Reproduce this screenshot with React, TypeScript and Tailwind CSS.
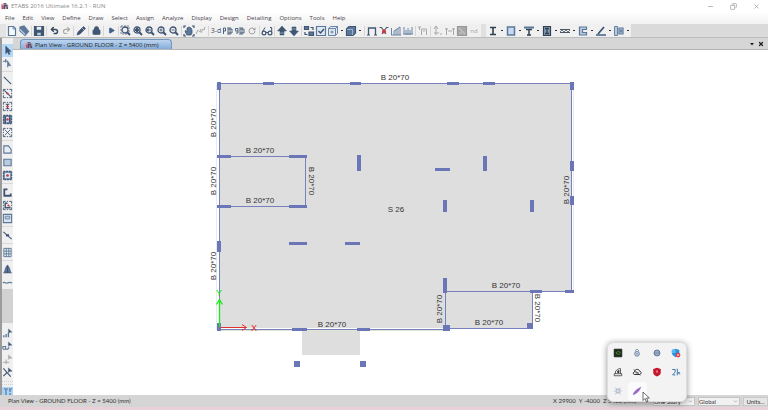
import type { ReactNode } from 'react';
import { ChevronDown, Copy, Lock, Minus, Play, Redo2, RotateCcw, Undo2, X } from 'lucide-react';

const NAVY = '#3f5573';
const STEEL = '#5b789b';
const PALE = '#b9cbdd';
const GRAY = '#a9a9a9';

function Ico({ children, color = NAVY }: { children: ReactNode; color?: string }) {
  return (
    <svg viewBox="0 0 12 12" className="w-3 h-3 shrink-0" fill="none" stroke={color} strokeWidth="1.2">
      {children}
    </svg>
  );
}

function Magnifier({ children }: { children?: ReactNode }) {
  return (
    <Ico>
      <circle cx="5" cy="5" r="3" strokeWidth="1.3" />
      <path d="M7.3 7.3L10 10" strokeWidth="2" />
      {children}
    </Ico>
  );
}

function Marquee() {
  return <path d="M1.5 4V1.5H4M8 1.5h2.5V4M10.5 8v2.5H8M4 10.5H1.5V8M5.3 1.5h1.4M5.3 10.5h1.4M1.5 5.3v1.4M10.5 5.3v1.4" strokeWidth="1" />;
}

function AppLogo() {
  return (
    <svg viewBox="0 0 9 9" className="w-2 h-2 shrink-0">
      <path d="M0 2h3v6H0z" fill="#e6a3b8" />
      <path d="M1 4h2v4H1z" fill="#b8567c" />
      <path d="M3 1h3v2h2v5H6V5H5v3H3z" fill="#5a4c68" />
      <path d="M4 2h1v1H4zM7 4h1v1H7z" fill="#eee" />
    </svg>
  );
}

type Item = [string, ReactNode];

const toolbar: Item[][] = [
  [
    ['New Model', <Ico color={STEEL}><path d="M2.5 1.5h5l2 2v7h-7z" fill="#f6f9fc" /><path d="M7 1.5v2.5h2.5" strokeWidth=".8" /></Ico>],
    ['Open', <Ico color={STEEL}><path d="M2 2l4-1 4.5 5.5-3.5 4L2 6z" fill={STEEL} /><path d="M2 4.5l5 5" stroke={PALE} /></Ico>],
  ],
  [['Save', <Ico><path d="M1.5 1.5h9v9h-9z" fill={NAVY} /><path d="M3.5 1.5h5V5h-5z" fill="#e8eef4" strokeWidth=".5" /><path d="M4 7.5h4v3H4z" fill={PALE} strokeWidth=".5" /></Ico>]],
  [
    ['Undo', <Undo2 className="w-[9px] h-[9px] text-[#3a4a60]" strokeWidth={4} />],
    ['Redo', <Redo2 className="w-[9px] h-[9px] text-[#a9a9a9]" strokeWidth={3} />],
  ],
  [['Edit', <Ico><path d="M2 10l1-3 5.5-5.5 2 2L5 9z" fill={NAVY} strokeWidth=".7" /><path d="M7 3l2 2" stroke={PALE} strokeWidth=".7" /></Ico>]],
  [['Lock Model', <Lock className="w-[9px] h-[9px] text-[#3f5573]" strokeWidth={3} fill="#3f5573" />]],
  [['Run Analysis', <Play className="w-[7px] h-[7px] text-[#3f5f8a]" fill="#3f5f8a" />]],
  [
    ['Rubber Band Zoom', <Magnifier><path d="M1 1h8v8H1z" strokeWidth=".7" strokeDasharray="2 1" /></Magnifier>],
    ['Full View', <Magnifier><path d="M3 5h4M5 3v4" strokeWidth="2" /></Magnifier>],
    ['Previous Zoom', <Magnifier><path d="M3 5h4M4.5 3.5L3 5l1.5 1.5" /></Magnifier>],
    ['Zoom In', <Magnifier><path d="M3.5 5h3M5 3.5v3" strokeWidth=".9" /></Magnifier>],
    ['Zoom Out', <Magnifier><path d="M3.5 5h3" strokeWidth=".9" /></Magnifier>],
  ],
  [
    ['Pan', <Ico><path d="M1 3V1h2M9 1h2v2M11 9v2H9M3 11H1V9" /><path d="M3.5 9.5L2 6l1-.5 1 1V3l1-.5L6 2l1 .5 1 .5 1 2v3L8 10H4z" fill={STEEL} strokeWidth=".8" /></Ico>],
    ['Measure', <Ico color={GRAY}><path d="M1 9l2-4 2 2 1-3M6 8l2-4 1 1 1-3" strokeWidth="1" /></Ico>],
  ],
  [
    ['3-d', <span className="text-[7px] leading-3 text-[#3f4f68]">3-d</span>],
    ['Plan View', <Ico><path d="M1.5 9V3h2v3h-2M6 2v8M6 4h4v4H6M8 2v8" strokeWidth=".9" /></Ico>],
    ['Elevation View', <Ico><path d="M4 6H1.5V3.5H4V8H2M6 2v8M6 4h4v4H6M8 2v8" strokeWidth=".9" /></Ico>],
    ['Rotate 3D View', <RotateCcw className="w-2 h-2 -scale-x-100 text-[#a2a2a2]" strokeWidth={3} />],
  ],
  [['Perspective', <Ico><circle cx="3" cy="8" r="1.9" /><circle cx="9" cy="8" r="1.9" /><path d="M1.3 7L4 2.5M10.7 7V2.5H9M5 7.5h2" strokeWidth="1" /></Ico>]],
  [
    ['Move Up', <Ico><path d="M6 1L1.5 6H4v4h4V6h2.5z" fill={NAVY} strokeWidth=".5" /><path d="M4 8h4" stroke={PALE} strokeWidth=".6" /></Ico>],
    ['Move Down', <Ico><path d="M6 11L1.5 6H4V2h4v4h2.5z" fill={NAVY} strokeWidth=".5" /><path d="M4 4h4" stroke={PALE} strokeWidth=".6" /></Ico>],
  ],
  [
    ['Object Shrink', <Ico><path d="M1.5 1.5h4v3h-4zM6 7h4.5v3.5H6z" fill={STEEL} /><path d="M7.5 2.5H10V5M2 7v2.5h2.5" /></Ico>],
    ['Display Options', <Ico color={STEEL}><path d="M1.5 1.5h9v9h-9z" fill="#dfe8f1" /><path d="M3.5 6l2 2L9 4" stroke={NAVY} strokeWidth="1.5" /></Ico>],
    ['Assign Display', <Ico color={STEEL}><path d="M1.5 3.5l2-2h7v7l-2 2h-7z" fill="#dfe8f1" strokeWidth=".9" /><path d="M1.5 3.5h7v7M8.5 3.5l2-2M3.5 7h3M5 5.5v3" strokeWidth=".9" /></Ico>],
    ['drop', null],
    ['Object View', <Ico><path d="M1.5 4L4 1.5h6.5V8L8 10.5H1.5z" fill={STEEL} /><path d="M2 4.5h5.5V10" stroke={PALE} strokeWidth=".7" /></Ico>],
    ['drop', null],
  ],
  [
    ['Undeformed Shape', <Ico><path d="M2.5 10V3h7v7" strokeWidth="1.3" /><path d="M1 10h3M8 10h3" strokeWidth="1" /></Ico>],
    ['Deformed Shape', <Ico color="#565d68"><path d="M1.5 2.5h2L6 6l2.5-3.5h2M4 9l2-3 2 3" /><circle cx="6" cy="6.5" r="2" fill="#c93540" stroke="none" /></Ico>],
    ['Force Diagram', <Ico color={STEEL}><path d="M1.5 10V3M1 10h10M4 10V6l6-4v8M6 10V5M8 10V3.5" strokeWidth=".9" /></Ico>],
    ['Shear Diagram', <Ico color={STEEL}><path d="M1 9h10M2 2v7M4 5v5M6 3v7M8 5v5M10 2v7" strokeWidth=".9" /></Ico>],
  ],
  [['Energy Diagram', <Ico color={GRAY}><path d="M1 2h3M2.5 2v3M4.5 10V4h5v6M6 6h2" strokeWidth="1" /></Ico>]],
  [
    ['Joint Load', <Ico color={GRAY}><path d="M4 1v9M2 4l2-3 2 3M2 8h5M8 9h2" strokeWidth="1" /></Ico>],
    ['Frame Load', <Ico color={GRAY}><path d="M2.5 10V3M9.5 10V3M1 4h3M8 4h3M4 6h4" strokeWidth="1" /></Ico>],
    ['Shell Load', <Ico color="#989898"><path d="M1.5 1.5h9v9h-9z" fill="#a8a8a8" /><path d="M3 3l6 6M3 8h3" stroke="#c4c4c4" /></Ico>],
    ['nd', <span className="text-[6px] leading-3 text-[#a5a5a5]">nd</span>],
  ],
];

const sections: Item[] = [
  ['Steel Frame', <Ico color="#33404f"><path d="M3 2.5h6M3 9.5h6M6 2v8" strokeWidth="1.6" /></Ico>],
  ['Concrete Frame', <Ico><path d="M2.5 2h7v8h-7z" fill="#c6d9ee" stroke={STEEL} strokeWidth="1.5" /></Ico>],
  ['Composite Beam', <Ico color="#33404f"><path d="M1 2.5h10" stroke={STEEL} strokeWidth="2" /><path d="M3 4.5h6M6 4v6M4 10h4" strokeWidth="1.5" /></Ico>],
  ['Composite Column', <Ico color="#33404f"><path d="M2.5 1.5h7v9h-7z" fill="#8399b3" /><path d="M4 3.5h4M4 8.5h4M6 3.5v5" strokeWidth="1.3" /></Ico>],
  ['Steel Joist', <Ico color="#4b5563"><path d="M1 4.5h10M1 7.5h10" /><path d="M1 7l2-2 2 2 2-2 2 2 2-2" strokeWidth=".8" /></Ico>],
  ['Shear Wall', <Ico color={STEEL}><path d="M9.5 2h-7v8h7V7.500h-4v-3h4z" fill={PALE} /></Ico>],
  ['Slab Design', <Ico color={STEEL}><path d="M1 10h10" strokeWidth="1.8" /><path d="M3 9l6-7" stroke={NAVY} strokeWidth="1.8" /></Ico>],
  ['Connection', <Ico color={STEEL}><path d="M1.5 1.5h3v9h-3z" fill={PALE} strokeWidth=".9" /><path d="M6 3h4v6H6z" fill={PALE} /><path d="M8 4.5v3" stroke={NAVY} /></Ico>],
];

const drawTools: Item[][] = [
  [
    ['Select', <Ico><path d="M4 1v8.5l2-2L7.5 10.500l1.300-.6L7.500 7H10z" fill={NAVY} strokeWidth=".5" /></Ico>],
    ['Reshape', <Ico color={STEEL}><path d="M1 3.5h5M4 1v4" /><path d="M6 3v7l1.500-2 2 .5z" fill={STEEL} strokeWidth=".7" /></Ico>],
  ],
  [
    ['Draw Line', <Ico><path d="M2 2l8 8" /></Ico>],
    ['Quick Draw Beam', <Ico><Marquee /><path d="M2.5 2.5l7 7" /><circle cx="6" cy="6" r="1.2" fill="#c93540" stroke="none" /></Ico>],
    ['Quick Draw Column', <Ico><Marquee /><path d="M4 3.5h4M4 8.5h4M6 3.5v5" /><circle cx="6" cy="6" r="1.3" fill="#c93540" stroke="none" /></Ico>],
    ['Quick Draw Secondary', <Ico><path d="M1.5 1.5h9v9h-9z" fill={STEEL} strokeDasharray="2 1" /><path d="M4 2v8M8 2v8" /><path d="M4.5 3h3v6h-3z" fill="#dce5ee" stroke="none" /><circle cx="6" cy="6" r="1.3" fill="#c93540" stroke="none" /></Ico>],
    ['Quick Draw Brace', <Ico><Marquee /><path d="M3 3l6 6M9 3L3 9" strokeWidth=".9" /></Ico>],
  ],
  [
    ['Draw Floor', <Ico color={STEEL}><path d="M2 10V2h5l3 4v4z" fill="#e7edf3" /></Ico>],
    ['Draw Rectangle', <Ico color={STEEL}><path d="M2 2.5h8v7H2z" fill={PALE} /></Ico>],
    ['Quick Draw Floor', <Ico><path d="M1.5 1.5h9v9h-9z" fill={STEEL} strokeDasharray="2 1" /><path d="M3 3h6v6H3z" fill="#dce5ee" stroke="none" /><circle cx="6" cy="6" r="1.4" fill="#c93540" stroke="none" /></Ico>],
  ],
  [
    ['Draw Wall', <Ico><path d="M6 2.5H2.5v7h7V7" strokeWidth="2" /></Ico>],
    ['Quick Draw Wall', <Ico><Marquee /><path d="M6 3.5H3.5v5h5V7" strokeWidth="1.6" /><circle cx="7" cy="6" r="1.2" fill="#c93540" stroke="none" /></Ico>],
    ['Draw Opening', <Ico color={STEEL}><path d="M1.5 1.5h9v9h-9z" fill="#dce5ee" /><path d="M3.5 3.5h5v3h-5z" fill={PALE} strokeWidth=".8" /></Ico>],
  ],
  [['Draw Link', <Ico><path d="M1.5 2l9 8" /><path d="M4.5 6.5l3-1.5" strokeWidth="2" /></Ico>]],
  [['Draw Grid', <Ico color={STEEL}><path d="M2 1.5h8v9H2zM2 4.5h8M2 7.5h8M4.7 1.5v9M7.4 1.5v9" strokeWidth="1" /></Ico>]],
  [
    ['Draw Tower', <Ico><path d="M6 1l2 3 1.5 5h-7L4 4z" fill={STEEL} strokeWidth=".7" /><path d="M1.5 9.5h9M6 2v8" /></Ico>],
    ['Draw Tendon', <Ico color={STEEL}><path d="M1 6.5c2-2 3 1 5 0s3-1 5 0" strokeWidth="1.3" /></Ico>],
  ],
];

const snapTools: Item[] = [
  ['Snap to Joints', <Ico color={STEEL}><path d="M2 10V8M4.5 10V6.5M7 10V5" strokeWidth="1.5" /><path d="M7 1v5l1.5-1.5H11z" fill={NAVY} strokeWidth=".5" /></Ico>],
  ['Snap to Lines', <Ico color={STEEL}><path d="M1 9V6h3v3M6 9l2-2M1 9h6" /><path d="M7 1v5l1.5-1.5H11z" fill={NAVY} strokeWidth=".5" /></Ico>],
  ['Snap to Middle', <Ico color={GRAY}><path d="M1 9h7M4.5 6v5" /><path d="M7 1v5l1.5-1.5H11z" fill={GRAY} strokeWidth=".5" /></Ico>],
  ['Snap to Edges', <Ico><path d="M1.5 1.5l8 9M1.5 10l4-4" /><path d="M7 1v5l1.5-1.5H11z" fill={NAVY} strokeWidth=".5" /></Ico>],
];

const menus = ['File', 'Edit', 'View', 'Define', 'Draw', 'Select', 'Assign', 'Analyze', 'Display', 'Design', 'Detailing', 'Options', 'Tools', 'Help'];

// x, y, width, height of every column and wall in plan
const columns = [
  [217, 82, 4, 8], [263, 82, 11, 3], [350, 82, 11, 3], [447, 82, 12, 3], [483, 82, 12, 3], [570, 82, 4, 8],
  [570, 161, 4, 10], [570, 196, 4, 9], [217, 155, 14, 3], [289, 155, 18, 3], [217, 205, 14, 3], [289, 205, 18, 3],
  [357, 155, 4, 16], [483, 156, 4, 15], [435, 168, 15, 3], [443, 200, 4, 12], [530, 200, 4, 12],
  [217, 241, 4, 11], [289, 242, 18, 3], [345, 242, 15, 3], [217, 323, 4, 8], [292, 328, 15, 3], [357, 328, 13, 3],
  [294, 361, 6, 6], [360, 361, 6, 6], [443, 278, 4, 15], [530, 290, 12, 3], [565, 290, 9, 3], [443, 325, 7, 6], [527, 323, 6, 6],
];

// x, y, rotation
const beamLabels = [
  [395, 80, 0], [260, 153, 0], [260, 203, 0], [332, 327, 0], [506, 288, 0], [489, 325, 0],
  [216, 123, -90], [216, 181, -90], [216, 266, -90], [569, 190, -90], [442, 309, -90],
  [309, 181, 90], [535, 308, 90],
];

function PlanView() {
  return (
    <svg viewBox="13 50 755 345" className="w-full h-full" role="img" aria-label="Ground floor plan">
      <path d="M219 83H572V291H533V328H219z" fill="#dedede" />
      <path d="M302 331H360V355H302z" fill="#dedede" />
      <path d="M216.5 84V330M573.5 84V292" stroke="#e9e9f5" />
      <path d="M219 330.5H444" stroke="#dfe6cd" />
      <g stroke="#7580bd" fill="none">
        <path d="M219.5 329.5V83.5H571.5V291.5H445.5V329" />
        <path d="M219 329.5H446M446 328.5H530M532.5 291V325" />
        <path d="M219 156.5H305.5V206.5H219" />
      </g>
      {columns.map(([x, y, w, h]) => (
        <rect key={`${x}-${y}`} x={x} y={y} width={w} height={h} fill="#6a76b5" />
      ))}
      <g className="font-['Liberation_Sans',sans-serif] text-[8px]" fill="#333" textAnchor="middle">
        {beamLabels.map(([x, y, r]) => (
          <text key={`${x}-${y}`} transform={`translate(${x} ${y}) rotate(${r})`}>B 20*70</text>
        ))}
        <text x="396" y="212">S 26</text>
        <text x="219" y="296" fill="#0be00b" className="text-[9px]">Y</text>
        <text x="254" y="331" fill="#e81d1d" className="text-[9px]">X</text>
      </g>
      <path d="M219.5 327V300M216.5 304.5l3-5 3 5" fill="none" stroke="#1be81b" strokeWidth="1.3" />
      <path d="M221 327.5H246M242 324.5l4.5 3-4.5 3" fill="none" stroke="#e03030" />
    </svg>
  );
}

const trayIcons: Item[] = [
  ['NVIDIA Settings', <Ico color="#1d2a1d"><path d="M1.5 1.5h9v9h-9z" fill="#1d2a1d" /><path d="M3.5 6c2-2.5 4-2 5.5 0-1.5 2-3.5 2-5.5 0z" stroke="#5b9a35" strokeWidth="1" /></Ico>],
  ['Audio Service', <Ico color="#6c83a8"><circle cx="6" cy="7" r="2.8" fill="#cfd9e8" /><path d="M4 4c0-3 4-3 4 0M5 7h2" /></Ico>],
  ['Network Service', <Ico color="#5b7396"><circle cx="6" cy="6" r="3.5" fill="#b6c5d9" /><path d="M3 5h6M3 7h6" strokeWidth=".9" /></Ico>],
  ['Windows Security', <Ico><path d="M5.5 1L10 2.5v3C10 8 8 10 5.500 11 3 10 1 8 1 5.500v-3z" fill="#2790d8" stroke="none" /><path d="M5.5 1v5H1V2.500z" fill="#59b9f2" stroke="none" /><circle cx="8.5" cy="8.5" r="2.8" fill="#dd3f4b" stroke="none" /><path d="M7.5 7.5l2 2M9.5 7.5l-2 2" stroke="#fff" strokeWidth=".8" /></Ico>],
  ['Removable Drive', <Ico color="#333"><path d="M1.5 8h9v2.5h-9zM3 8V5l4-3h2v6" strokeWidth=".9" /><path d="M5 6l2-2v3z" fill="#333" /></Ico>],
  ['Cloud Offline', <Ico color="#333"><path d="M3 9C1 9 1 6 3 6c0-4 6-4 6-1 2.5 0 2.5 4 0 4z" /><path d="M2 3l8 7M4 7h4" strokeWidth=".9" /></Ico>],
  ['Antivirus', <Ico><path d="M6 1l4.5 1.500v4.500c0 2-2 3.500-4.500 4.500-2.500-1-4.500-2.500-4.500-4.500V2.500z" fill="#c5162c" stroke="none" /><path d="M6 4v3" stroke="#f3bec4" /></Ico>],
  ['Sync', <Ico color="#3f78ad"><path d="M1.5 3H5v3L2 9.500h3M7.500 2v3l3 4M7 7h4M7.500 7v3" /></Ico>],
  ['Globe', <Ico color="#9baabf"><circle cx="6" cy="6" r="2.5" /><path d="M3 2l1 2M9 2L8 4M2 6H1M10 6h1M4 8l-1 2M8 8l1 2M5 6h2" strokeWidth=".9" /></Ico>],
  ['Pen', <Ico color="#8b57bd"><path d="M1.5 10.500c0-2 2-4 4-6l5-3L8.500 5.500l-3 3z" fill="#9a66ca" strokeWidth=".7" /></Ico>],
];

function TrayPopup() {
  return (
    <div className="absolute right-[81px] bottom-2 w-20 h-[60px] grid grid-cols-4 grid-rows-3 bg-[#f3f3f4] rounded-md border border-[#dcdcdc] shadow-[0_1px_6px_rgba(0,0,0,0.4)]">
      {trayIcons.map(([name, icon]) => (
        <button key={name} aria-label={name} className={`flex items-center justify-center rounded-sm [&>svg]:w-2.5 [&>svg]:h-2.5 ${name === 'Pen' ? 'bg-[#fbfbfb]' : ''}`}>
          {icon}
        </button>
      ))}
      <svg viewBox="0 0 8 12" className="absolute left-[34px] top-12 w-2 h-3">
        <path d="M1 1v8.5l2-2L4.500 11l1.500-.7L4.600 7h2.700z" fill="#fff" stroke="#333" strokeWidth=".7" />
      </svg>
    </div>
  );
}

function StatusSelect({ label, value }: { label: string; value: string }) {
  return (
    <div className="relative flex">
      <select aria-label={label} className="appearance-none w-[42px] h-[9px] bg-[#f1f1f1] border border-[#c4c4c4] text-[6px] leading-[7px] text-[#333]">
        <option>{value}</option>
      </select>
      <ChevronDown className="absolute right-0.5 top-0.5 w-[5px] h-[5px] text-[#666] pointer-events-none" />
    </div>
  );
}

function DropDot() {
  return (
    <span className="w-1.5 h-3 flex items-center justify-center">
      <span className="w-0.5 h-px bg-[#333]" />
    </span>
  );
}

export default function App() {
  return (
    <div className="relative h-screen flex flex-col overflow-hidden bg-white font-['Open_Sans',sans-serif] text-[6px] leading-3 text-[#333] whitespace-nowrap">
      {/* Title bar */}
      <header className="flex items-center justify-between h-3 shrink-0 pl-px pr-2 text-[#888]">
        <div className="flex items-center gap-0.5">
          <AppLogo />
          <h1>ETABS 2016 Ultimate 16.2.1 - RUN</h1>
        </div>
        <div className="flex items-center gap-4">
          <button aria-label="Minimize"><Minus className="w-[7px] h-[7px]" /></button>
          <button aria-label="Restore"><Copy className="w-[7px] h-[7px] -scale-x-100" /></button>
          <button aria-label="Close"><X className="w-[7px] h-[7px]" /></button>
        </div>
      </header>

      {/* Menu */}
      <nav className="flex items-center gap-2 h-3 shrink-0 px-[5px] bg-linear-to-b from-white to-[#f2f2f2] text-[#4a3f4a]">
        {menus.map((m) => (
          <button key={m}>{m}</button>
        ))}
      </nav>

      {/* Main toolbar */}
      <div className="flex h-[13px] shrink-0 bg-[#dadada]">
        <div className="flex items-center bg-[#f0f0f0]">
          <div className="w-1.5 h-full bg-[#e4e4e4]" />
          {toolbar.map((group, i) => (
            <div key={i} className="flex items-center">
              {i > 0 && <div className="w-px h-2.5 mx-px bg-[#d5d5d5]" />}
              {group.map(([name, icon], j) =>
                name === 'drop' ? <DropDot key={j} /> : (
                  <button key={name} aria-label={name} className="w-3 h-3 flex items-center justify-center [&>svg]:shrink-0">{icon}</button>
                )
              )}
            </div>
          ))}
          <div className="w-[5px] h-full mx-px bg-[#e0e0e0]" />
          {sections.map(([name, icon]) => (
            <div key={name} className="flex items-center">
              <button aria-label={name} className="w-3 h-3">{icon}</button>
              <DropDot />
            </div>
          ))}
        </div>
      </div>

      <div className="flex flex-1 min-h-0 border-t border-[#bdbdbd]">
        {/* Draw tools */}
        <aside className="flex flex-col w-[13px] shrink-0 pt-1.5 bg-[#f0f0f1] border-l-2 border-[#9b9b9b]">
          {drawTools.map((group, i) => (
            <div key={i}>
              {i > 0 && <div className="h-px mt-px mb-0.5 bg-[#d9d9d9]" />}
              {group.map(([name, icon]) => (
                <button key={name} aria-label={name}
                  className={`flex w-full h-[13px] items-center justify-center [&>svg]:w-[11px] [&>svg]:h-[11px] ${name === 'Select' ? 'bg-[#b4d8f5]' : ''}`}>
                  {icon}
                </button>
              ))}
            </div>
          ))}
          <div className="flex-1 bg-[#d2d2d2]" />
          <div className="pt-1">
            {snapTools.map(([name, icon]) => (
              <button key={name} aria-label={name} className="flex w-full h-[13px] items-center justify-center [&>svg]:w-[11px] [&>svg]:h-[11px]">
                {icon}
              </button>
            ))}
          </div>
          <div className="h-1 my-0.5 border-y border-dotted border-[#cfcfcf]" />
          <button aria-label="Snap Options" className="flex justify-center h-2 overflow-hidden bg-[#a9d3f5]">
            <Ico color={STEEL}><path d="M2 2h4M4 2v8M8 2v3M8 6v4M7 2h3" /></Ico>
          </button>
        </aside>

        <main className="flex flex-col flex-1 min-w-0">
          {/* Document tabs */}
          <div className="flex items-end justify-between h-3 shrink-0 pl-[7px] pr-1 bg-[#d6d6d6] border-b border-[#b5b5b5]">
            <button className="flex items-center gap-0.5 w-[152px] h-2.5 pl-1 rounded-t-sm border border-b-0 border-[#7396bf] bg-linear-to-b from-[#bcd5f0] to-[#85add9] text-[#222]">
              <AppLogo />
              Plan View - GROUND FLOOR - Z = 5400 (mm)
            </button>
            <div className="flex items-center gap-1 h-full text-[#222]">
              <button aria-label="Tab list">
                <svg viewBox="0 0 4 4" className="w-1 h-1"><path d="M0 1h4L2 3.5z" fill="#222" /></svg>
              </button>
              <button aria-label="Close tab"><X className="w-1.5 h-1.5" strokeWidth={5} /></button>
            </div>
          </div>
          <div className="flex-1 min-h-0">
            <PlanView />
          </div>
        </main>
      </div>

      {/* Status bar */}
      <footer className="flex items-center justify-between h-[15px] shrink-0 pl-2 bg-[#d5d5d5] border-b-3 border-[#ead0d9] font-['Lato',sans-serif]">
        <span>Plan View - GROUND FLOOR - Z = 5400 (mm)</span>
        <div className="flex items-center gap-[3px]">
          <span className="w-[97px] whitespace-pre">X 29900  Y -4000  Z 5400 (mm)</span>
          <StatusSelect label="Story" value="One Story" />
          <StatusSelect label="Coordinate system" value="Global" />
          <button className="w-[25px] h-[9px] leading-[7px] bg-[#e6e6e6] border border-[#cacaca]">Units...</button>
        </div>
      </footer>

      <TrayPopup />
    </div>
  );
}
